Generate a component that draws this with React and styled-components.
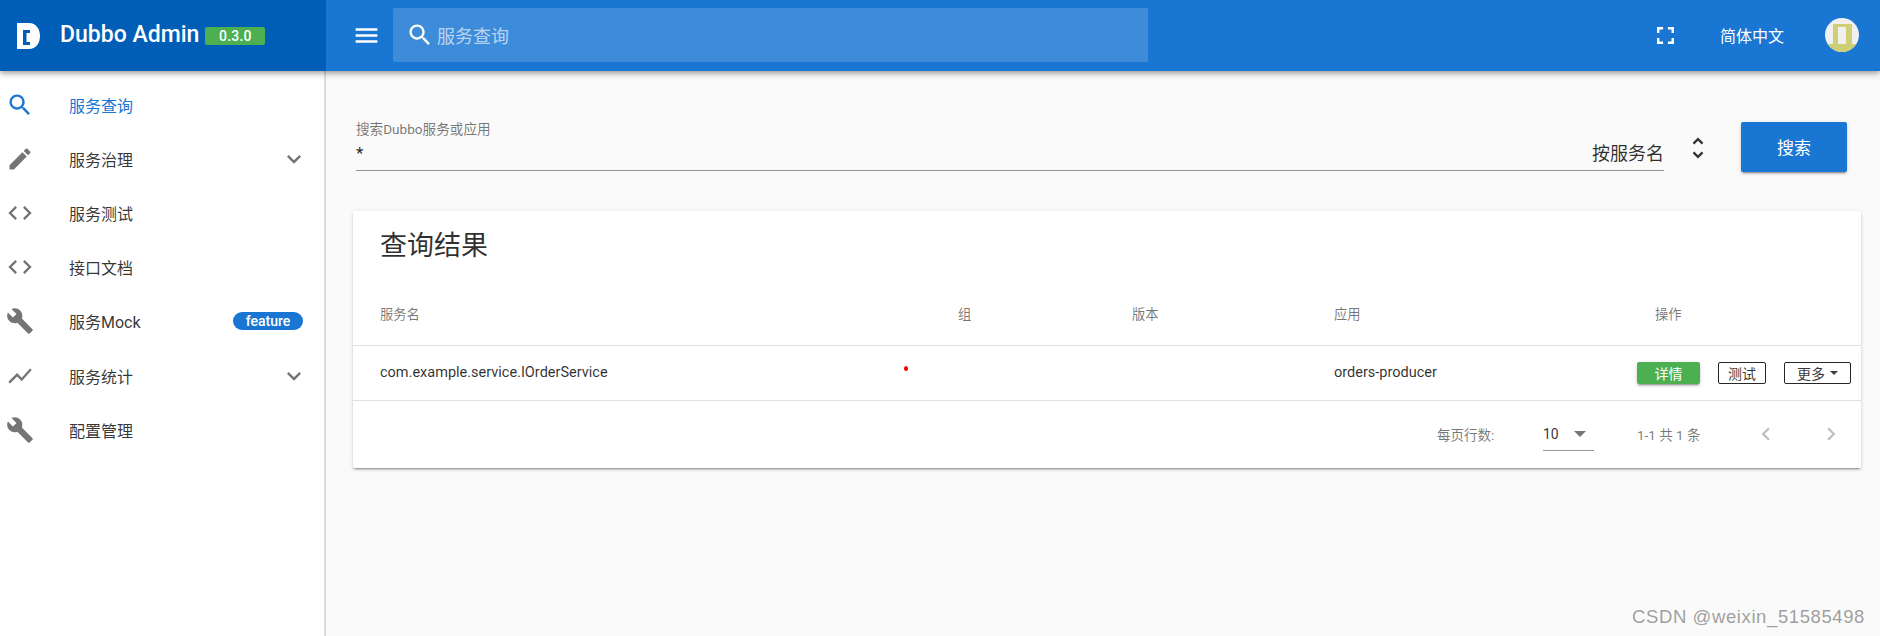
import React from "react";
import styled, { createGlobalStyle } from "styled-components";

const CJK = `Roboto, "Noto Sans CJK SC", sans-serif`;

const Global = createGlobalStyle`
  html, body { margin: 0; padding: 0; height: 636px; overflow: hidden; background: #fafafa; }
  body { font-family: ${CJK}; color: rgba(0,0,0,.87); }
  * { box-sizing: border-box; }
`;

const Page = styled.div`position: relative; width: 1880px; height: 636px; background: #fafafa; overflow: hidden;`;

const TopBar = styled.header`
  position: relative; z-index: 3; height: 71px; display: flex; align-items: center; background: #1976d2;
  box-shadow: 0 2px 4px -1px rgba(0,0,0,.2), 0 4px 5px 0 rgba(0,0,0,.14), 0 1px 10px 0 rgba(0,0,0,.12);
`;
const Brand = styled.div`
  width: 326px; height: 71px; flex: none; background: #005eb6; display: flex; align-items: center; padding-left: 17px;
`;
const BrandName = styled.span`
  margin-left: 20px; font-size: 23px; font-weight: 500; color: #fff; margin-top: -3px; white-space: nowrap;
`;
const Version = styled.span`
  margin-left: 6px; width: 60px; height: 18px; border-radius: 2px; background: #4caf50; color: #fff;
  font-size: 14px; font-weight: 500; display: flex; align-items: center; justify-content: center; margin-top: 1px; letter-spacing: .2px;
`;
const MenuButton = styled.div`width: 67px; flex: none; display: flex; justify-content: center; padding-left: 13px; color: #fff;`;
const SearchBox = styled.div`
  width: 755px; height: 54px; flex: none; border-radius: 2px; background: rgba(255,255,255,.16); display: flex; align-items: center; padding-left: 13px; gap: 3px; color: #fff; margin-top: -1px;
`;
const SearchHint = styled.span`font-size: 18px; color: rgba(255,255,255,.65); margin-top: -1px;`;
const TopRight = styled.div`margin-left: auto; display: flex; align-items: center; color: #fff; margin-top: -1px;`;
const FullScreen = styled.div`display: flex; margin-right: 40px;`;
const Lang = styled.span`font-size: 16px; margin-right: 41px;`;
const Avatar = styled.div`
  width: 34px; height: 34px; border-radius: 50%; overflow: hidden; margin-right: 21px; flex: none;
`;

const Body = styled.div`display: flex; height: 565px;`;
const Side = styled.aside`
  width: 326px; flex: none; background: #fff; border-right: 2px solid #dcdcdc; padding-top: 7px;
`;
const SideItem = styled.div`
  height: 54.1px; display: flex; align-items: center; padding-left: 6px; font-size: 16px;
`;
const IconSlot = styled.span`
  width: 63px; flex: none; display: flex; align-items: center; color: ${p => (p.$active ? "#1976d2" : "#757575")};
`;
const SideText = styled.span`white-space: nowrap; color: ${p => (p.$active ? "#1976d2" : "rgba(0,0,0,.8)")};`;
const Chevron = styled.span`margin-left: auto; margin-right: 16px; display: flex; color: #757575;`;
const Feature = styled.span`
  margin-left: auto; margin-right: 21px; width: 70px; height: 18px; border-radius: 9px; background: #1976d2; color: #fff;
  font-size: 14px; font-weight: 500; display: flex; align-items: center; justify-content: center;
`;

const Main = styled.main`flex: 1; padding: 0 19px 0 27px;`;

const SearchRow = styled.div`display: flex; align-items: flex-start; padding-top: 49px; padding-left: 3px; height: 140px;`;
const Field = styled.div`
  width: 1308px; height: 51px; border-bottom: 1px solid #949494; flex: none; position: relative;
`;
const FieldLabel = styled.span`position: absolute; left: 0; top: -2px; font-size: 13.6px; color: rgba(0,0,0,.54); white-space: nowrap;`;
const FieldValue = styled.span`position: absolute; left: 0; top: 23px; font-size: 17px; color: rgba(0,0,0,.87);`;
const FieldSelect = styled.span`position: absolute; right: 0; top: 19px; font-size: 18px; color: rgba(0,0,0,.82);`;
const Updown = styled.span`width: 36px; flex: none; display: flex; justify-content: center; padding-top: 14px; color: rgba(0,0,0,.8); margin-left: 16px;`;
const SearchBtn = styled.button`
  margin-left: 25px; margin-top: 2px; width: 106px; height: 50px; border: 0; border-radius: 2px; background: #1976d2; color: #fff;
  font-family: ${CJK}; font-size: 17px; padding: 0 0 2px;
  box-shadow: 0 3px 1px -2px rgba(0,0,0,.2), 0 2px 2px 0 rgba(0,0,0,.14), 0 1px 5px 0 rgba(0,0,0,.12);
`;

const Card = styled.section`
  width: 1508px; height: 257px; background: #fff; border-radius: 2px; position: relative;
  box-shadow: 0 3px 1px -2px rgba(0,0,0,.2), 0 2px 2px 0 rgba(0,0,0,.14), 0 1px 5px 0 rgba(0,0,0,.12);
`;
const CardTitle = styled.h2`
  margin: 0; height: 72px; padding: 17px 0 0 27px; font-size: 27px; font-weight: 400; line-height: 36px; color: rgba(0,0,0,.82);
`;
const Row = styled.div`
  display: grid; grid-template-columns: 578px 174px 202px 303px 1fr; padding: 0 0 2px 27px; align-items: center;
  height: ${p => p.$h}px; border-bottom: 1px solid #e0e0e0;
`;
const Th = styled.span`font-size: 13.3px; color: rgba(0,0,0,.54); margin-left: ${p => p.$ml || 0}px;`;
const Td = styled.span`font-size: 14.5px; color: rgba(0,0,0,.82); white-space: nowrap;`;
const Actions = styled.div`display: flex; align-items: center; margin-top: 2px;`;
const Detail = styled.span`
  width: 63px; height: 22px; flex: none; border-radius: 2px; background: #4caf50; color: #fff; font-size: 14px; display: flex; align-items: center; justify-content: center;
  box-shadow: 0 3px 1px -2px rgba(0,0,0,.2), 0 2px 2px 0 rgba(0,0,0,.14), 0 1px 5px 0 rgba(0,0,0,.12);
`;
const Outline = styled.span`
  width: ${p => p.$w}px; height: 22px; flex: none; margin-left: ${p => p.$ml}px; border: 1px solid rgba(0,0,0,.85); border-radius: 2px; font-size: 14px; color: rgba(0,0,0,.8);
  display: flex; align-items: center; justify-content: center; gap: 5px;
`;
const Caret = styled.span`width: 0; height: 0; border: 4px solid transparent; border-top-color: rgba(0,0,0,.75); border-bottom: 0;`;
const Dot = styled.span`position: absolute; left: 551px; top: 155px; width: 4px; height: 5px; border-radius: 50%; background: #f00000;`;

const Foot = styled.div`display: flex; align-items: center; height: 66px; padding-left: 1084px; font-size: 13.5px; color: rgba(0,0,0,.54);`;
const PerPage = styled.span`width: 60px; flex: none; white-space: nowrap;`;
const PageSelect = styled.div`
  width: 51px; height: 34px; margin-left: 46px; flex: none; border-bottom: 1px solid #949494; display: flex; align-items: center; justify-content: space-between; font-size: 14px; color: rgba(0,0,0,.82); padding: 1px 8px 0 0;
`;
const GrayCaret = styled.span`width: 0; height: 0; border: 6px solid transparent; border-top-color: rgba(0,0,0,.54); border-bottom: 0;`;
const Count = styled.span`margin-left: 43px; width: 64px; flex: none; white-space: nowrap; color: rgba(0,0,0,.54);`;
const PageArrow = styled.span`display: flex; margin-left: ${p => p.$ml}px; color: rgba(0,0,0,.26);`;

const Watermark = styled.div`
  position: absolute; right: 15px; bottom: 8px; font-family: "Liberation Sans", sans-serif; font-size: 18.5px; color: rgba(128,128,128,.75); letter-spacing: .6px;
`;

const I = ({ d, size = 24 }) => (
  <svg width={size} height={size} viewBox="0 0 24 24" fill="currentColor"><path d={d} /></svg>
);
const P = {
  search: "M15.5 14h-.79l-.28-.27C15.41 12.59 16 11.11 16 9.5 16 5.91 13.09 3 9.5 3S3 5.91 3 9.5 5.91 16 9.5 16c1.61 0 3.09-.59 4.23-1.57l.27.28v.79l5 4.99L20.49 19l-4.99-5zm-6 0C7.01 14 5 11.99 5 9.5S7.01 5 9.5 5 14 7.01 14 9.5 11.99 14 9.5 14z",
  edit: "M3 17.25V21h3.75L17.81 9.94l-3.75-3.75L3 17.25zM20.71 7.04c.39-.39.39-1.02 0-1.41l-2.34-2.34c-.39-.39-1.02-.39-1.41 0l-1.83 1.83 3.75 3.75 1.83-1.83z",
  code: "M9.4 16.6L4.8 12l4.6-4.6L8 6l-6 6 6 6 1.4-1.4zm5.2 0l4.6-4.6-4.6-4.6L16 6l6 6-6 6-1.4-1.4z",
  build: "M22.7 19l-9.1-9.1c.9-2.3.4-5-1.5-6.9-2-2-5-2.4-7.4-1.3L9 6 6 9 1.6 4.7C.4 7.1.9 10.1 2.9 12.1c1.9 1.9 4.6 2.4 6.9 1.5l9.1 9.1c.4.4 1 .4 1.4 0l2.3-2.3c.5-.4.5-1.1.1-1.4z",
  show: "M3.5 18.49l6-6.01 4 4L22 6.92l-1.41-1.41-7.09 7.97-4-4L2 16.99z",
  down: "M7.41 8.59L12 13.17l4.59-4.58L18 10l-6 6-6-6z",
  menu: "M3 18h18v-2H3v2zm0-5h18v-2H3v2zm0-7v2h18V6H3z",
  full: "M7 14H5v5h5v-2H7v-3zm-2-4h2V7h3V5H5v5zm12 7h-3v2h5v-5h-2v3zM14 5v2h3v3h2V5h-5z",
  updown: "M12 5.83L15.17 9l1.41-1.41L12 3 7.41 7.59 8.83 9 12 5.83zm0 12.34L8.83 15l-1.41 1.41L12 21l4.59-4.59L15.17 15 12 18.17z",
  left: "M15.41 7.41L14 6l-6 6 6 6 1.41-1.41L10.83 12z",
  right: "M10 6L8.59 7.41 13.17 12l-4.58 4.59L10 18l6-6z",
};

const items = [
  { icon: P.search, text: "服务查询", active: true },
  { icon: P.edit, text: "服务治理", chevron: true },
  { icon: P.code, text: "服务测试" },
  { icon: P.code, text: "接口文档" },
  { icon: P.build, text: "服务Mock", badge: "feature" },
  { icon: P.show, text: "服务统计", chevron: true },
  { icon: P.build, text: "配置管理" },
];

export default function App() {
  return (
    <Page>
      <Global />
      <TopBar>
        <Brand>
          <svg width="23" height="26" viewBox="0 0 23 26">
            <path fillRule="evenodd" fill="#fff" d="M0 0h12c7 0 11 6 11 13s-4 13-11 13H0zM6 7h7v3H9.5v9H13v3H6z" />
          </svg>
          <BrandName>Dubbo Admin</BrandName>
          <Version>0.3.0</Version>
        </Brand>
        <MenuButton><I d={P.menu} size={29} /></MenuButton>
        <SearchBox>
          <I d={P.search} size={28} />
          <SearchHint>服务查询</SearchHint>
        </SearchBox>
        <TopRight>
          <FullScreen><I d={P.full} size={29} /></FullScreen>
          <Lang>简体中文</Lang>
          <Avatar>
            <svg width="34" height="34" viewBox="0 0 34 34">
              <rect width="34" height="34" fill="#f0f0f0" />
              <path fill="#cfcf76" d="M8 6h19v20h7v8H0v-8h8zM13 9v17h8V9z" />
            </svg>
          </Avatar>
        </TopRight>
      </TopBar>
      <Body>
        <Side>
          {items.map(it => (
            <SideItem key={it.text}>
              <IconSlot $active={it.active}>
                <I d={it.icon} size={28} />
              </IconSlot>
              <SideText $active={it.active}>{it.text}</SideText>
              {it.chevron && <Chevron><I d={P.down} size={28} /></Chevron>}
              {it.badge && <Feature>{it.badge}</Feature>}
            </SideItem>
          ))}
        </Side>
        <Main>
          <SearchRow>
            <Field>
              <FieldLabel>搜索Dubbo服务或应用</FieldLabel>
              <FieldValue>*</FieldValue>
              <FieldSelect>按服务名</FieldSelect>
            </Field>
            <Updown><I d={P.updown} size={28} /></Updown>
            <SearchBtn>搜索</SearchBtn>
          </SearchRow>
          <Card>
            <CardTitle>查询结果</CardTitle>
            <Row $h={63}>
              <Th>服务名</Th><Th>组</Th><Th>版本</Th><Th>应用</Th><Th $ml={18}>操作</Th>
            </Row>
            <Row $h={55}>
              <Td>com.example.service.IOrderService</Td><span /><span /><Td>orders-producer</Td>
              <Actions>
                <Detail>详情</Detail>
                <Outline $w={48} $ml={18}>测试</Outline>
                <Outline $w={67} $ml={18}>更多<Caret /></Outline>
              </Actions>
            </Row>
            <Dot />
            <Foot>
              <PerPage>每页行数:</PerPage>
              <PageSelect>10<GrayCaret /></PageSelect>
              <Count>1-1 共 1 条</Count>
              <PageArrow $ml={52}><I d={P.left} size={26} /></PageArrow>
              <PageArrow $ml={39}><I d={P.right} size={26} /></PageArrow>
            </Foot>
          </Card>
        </Main>
      </Body>
      <Watermark>CSDN @weixin_51585498</Watermark>
    </Page>
  );
}
